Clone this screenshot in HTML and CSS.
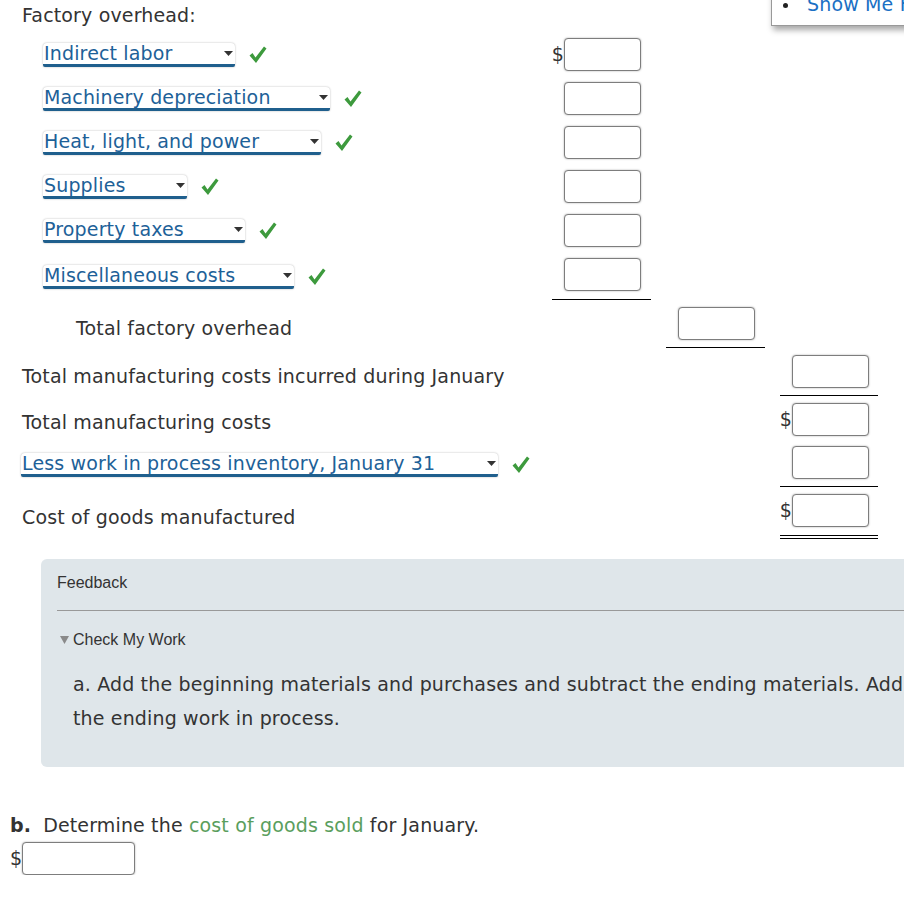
FILE: index.html
```html
<!DOCTYPE html>
<html lang="en">
<head>
    <meta charset="UTF-8">
    <meta name="viewport" content="width=device-width, initial-scale=1.0">
    <title>Cost of Goods Manufactured</title>
    <link rel="stylesheet" href="styles.css">
</head>
<body>
    <div class="menu">
        <div class="menu-item"><span class="dot"></span><a href="#" class="menu-link">Show Me How</a></div>
    </div>

    <div class="page">
        <div class="part-a">
            <div class="heading">Factory overhead:</div>

            <div class="row item">
                <div class="label">
                    <span class="dd w-labor">Indirect labor<svg class="arrow" width="9" height="5" viewBox="0 0 9 5"><polygon points="0,0 9,0 4.5,5"/></svg></span>
                    <svg class="check" width="18" height="18" viewBox="0 0 18 18"><path d="M0.5 9.5 L3.5 7 L6.5 11.5 L15 0.5 L17.5 2.5 L7 17 Z"/></svg>
                </div>
                <div class="cell c1"><span class="dollar">$</span><input class="box" type="text"></div>
            </div>

            <div class="row item">
                <div class="label">
                    <span class="dd w-machinery">Machinery depreciation<svg class="arrow" width="9" height="5" viewBox="0 0 9 5"><polygon points="0,0 9,0 4.5,5"/></svg></span>
                    <svg class="check" width="18" height="18" viewBox="0 0 18 18"><path d="M0.5 9.5 L3.5 7 L6.5 11.5 L15 0.5 L17.5 2.5 L7 17 Z"/></svg>
                </div>
                <div class="cell c1"><input class="box" type="text"></div>
            </div>

            <div class="row item">
                <div class="label">
                    <span class="dd w-power">Heat, light, and power<svg class="arrow" width="9" height="5" viewBox="0 0 9 5"><polygon points="0,0 9,0 4.5,5"/></svg></span>
                    <svg class="check" width="18" height="18" viewBox="0 0 18 18"><path d="M0.5 9.5 L3.5 7 L6.5 11.5 L15 0.5 L17.5 2.5 L7 17 Z"/></svg>
                </div>
                <div class="cell c1"><input class="box" type="text"></div>
            </div>

            <div class="row item">
                <div class="label">
                    <span class="dd w-supplies">Supplies<svg class="arrow" width="9" height="5" viewBox="0 0 9 5"><polygon points="0,0 9,0 4.5,5"/></svg></span>
                    <svg class="check" width="18" height="18" viewBox="0 0 18 18"><path d="M0.5 9.5 L3.5 7 L6.5 11.5 L15 0.5 L17.5 2.5 L7 17 Z"/></svg>
                </div>
                <div class="cell c1"><input class="box" type="text"></div>
            </div>

            <div class="row item">
                <div class="label">
                    <span class="dd w-taxes">Property taxes<svg class="arrow" width="9" height="5" viewBox="0 0 9 5"><polygon points="0,0 9,0 4.5,5"/></svg></span>
                    <svg class="check" width="18" height="18" viewBox="0 0 18 18"><path d="M0.5 9.5 L3.5 7 L6.5 11.5 L15 0.5 L17.5 2.5 L7 17 Z"/></svg>
                </div>
                <div class="cell c1"><input class="box" type="text"></div>
            </div>

            <div class="row item last">
                <div class="label">
                    <span class="dd w-misc">Miscellaneous costs<svg class="arrow" width="9" height="5" viewBox="0 0 9 5"><polygon points="0,0 9,0 4.5,5"/></svg></span>
                    <svg class="check" width="18" height="18" viewBox="0 0 18 18"><path d="M0.5 9.5 L3.5 7 L6.5 11.5 L15 0.5 L17.5 2.5 L7 17 Z"/></svg>
                </div>
                <div class="cell c1 rule"><input class="box" type="text"></div>
            </div>

            <div class="row total">
                <div class="label indent">Total factory overhead</div>
                <div class="cell c2 rule"><input class="box" type="text"></div>
            </div>

            <div class="row total">
                <div class="label">Total manufacturing costs incurred during January</div>
                <div class="cell c3 rule"><input class="box" type="text"></div>
            </div>

            <div class="row total tight">
                <div class="label">Total manufacturing costs</div>
                <div class="cell c3"><span class="dollar">$</span><input class="box" type="text"></div>
            </div>

            <div class="row total">
                <div class="label select-label">
                    <span class="dd w-less">Less work in process inventory, January 31<svg class="arrow" width="9" height="5" viewBox="0 0 9 5"><polygon points="0,0 9,0 4.5,5"/></svg></span>
                    <svg class="check" width="18" height="18" viewBox="0 0 18 18"><path d="M0.5 9.5 L3.5 7 L6.5 11.5 L15 0.5 L17.5 2.5 L7 17 Z"/></svg>
                </div>
                <div class="cell c3 rule"><input class="box" type="text"></div>
            </div>

            <div class="row total">
                <div class="label">Cost of goods manufactured</div>
                <div class="cell c3 double"><span class="dollar">$</span><input class="box" type="text"></div>
            </div>

            <div class="feedback">
                <div class="fb-title">Feedback</div>
                <div class="fb-toggle">
                    <svg width="9" height="8" viewBox="0 0 9 8"><polygon points="0,0 9,0 4.5,8"/></svg>
                    Check My Work
                </div>
                <p class="fb-text">a. Add the beginning materials and purchases and subtract the ending materials. Add<br>the ending work in process.</p>
            </div>
        </div>

        <div class="part-b">
            <div class="question"><span class="part-letter">b.</span>Determine the <span class="term">cost of goods sold</span> for January.</div>
            <div class="answer"><span class="dollar">$</span><input class="box wide" type="text"></div>
        </div>
    </div>
</body>
</html>
```

FILE: styles.css
```css
body {
    margin: 0;
    font-family: "DejaVu Sans", Verdana, sans-serif;
    font-size: 19px;
    letter-spacing: 0.15px;
    color: #333;
    background-color: #fff;
    overflow-x: hidden;
}

/* popup menu peeking in at the top right */
.menu {
    position: absolute;
    top: -40px;
    left: 771px;
    width: 300px;
    height: 66px;
    padding-top: 31px;
    box-sizing: border-box;
    background-color: #fff;
    border: 1px solid #999;
    box-shadow: 2px 4px 6px rgba(0, 0, 0, 0.35);
}

.menu-item {
    display: flex;
    align-items: center;
    line-height: 24px;
}

.dot {
    width: 5px;
    height: 5px;
    margin: 2px 0 0 11px;
    border-radius: 50%;
    background-color: #222;
}

.menu-link {
    margin-left: 19px;
    color: #1a70c4;
    text-decoration: none;
    white-space: nowrap;
}

.page {
    padding-left: 10px;
}

.part-a {
    padding-left: 12px;
}

.heading {
    line-height: 31px;
}

.row {
    display: grid;
    grid-template-columns: 515px 99px 99px 98px;
    column-gap: 15px;
}

.label {
    grid-column: 1;
    align-self: center;
    white-space: nowrap;
}

.c1 { grid-column: 2; }
.c2 { grid-column: 3; }
.c3 { grid-column: 4; }

.cell {
    display: flex;
    justify-content: flex-end;
    align-items: center;
    padding: 7px 10px 4px 0;
}

.c3 {
    padding-right: 9px;
}

.dollar {
    line-height: 1;
}

.box {
    width: 77px;
    height: 33px;
    box-sizing: border-box;
    margin: 0;
    padding: 0 6px;
    font: inherit;
    background-color: #fff;
    border: 1px solid #7d7d7d;
    border-radius: 4px;
    box-shadow: 0 0 2px rgba(0, 0, 0, 0.35);
}

.box.wide {
    width: 113px;
}

/* dropdown rows */
.item .label,
.select-label {
    display: flex;
    align-items: center;
}

.item .label {
    padding: 3px 0 0 21px;
}

.select-label {
    margin-left: -1px;
}

.dd {
    display: inline-flex;
    align-items: center;
    height: 24px;
    box-sizing: border-box;
    padding: 0 2px 0 1px;
    line-height: 21px;
    color: #1d6198;
    background-color: #fff;
    border-bottom: 3px solid #1f5f8d;
    border-radius: 4px 4px 2px 2px;
    box-shadow: 0 0 2px rgba(0, 0, 0, 0.3);
}

.dd .arrow {
    margin-left: auto;
    fill: #333;
}

.w-labor { width: 192px; }
.w-machinery { width: 287px; }
.w-power { width: 278px; }
.w-supplies { width: 144px; }
.w-taxes { width: 202px; }
.w-misc { width: 251px; }
.w-less { width: 477px; }

.check {
    margin-left: 14px;
    fill: #3d9a3d;
}

.item.last .cell {
    padding-bottom: 8px;
}

/* total rows */
.total .cell {
    padding-bottom: 7px;
}

.total .label {
    padding-top: 8px;
}

.total .select-label {
    padding-top: 3px;
}

.total.tight .cell {
    padding-bottom: 3px;
}

.indent {
    padding-left: 54px;
}

.rule {
    border-bottom: 1px solid #000;
}

.total .double {
    padding-bottom: 8px;
    border-bottom: 4px double #000;
}

/* feedback panel */
.feedback {
    width: 1000px;
    margin: 20px 0 0 19px;
    padding: 0 0 32px 16px;
    background-color: #dfe6ea;
    border-radius: 6px;
}

.fb-title {
    padding: 14px 0 17px;
    font-family: "Liberation Sans", Arial, sans-serif;
    font-size: 16px;
    letter-spacing: 0;
    line-height: 20px;
    border-bottom: 1px solid #999;
}

.fb-toggle {
    display: flex;
    align-items: center;
    margin-top: 19px;
    padding-left: 3px;
    font-family: "Liberation Sans", Arial, sans-serif;
    font-size: 16px;
    letter-spacing: 0;
    line-height: 20px;
}

.fb-toggle svg {
    margin-right: 4px;
    fill: #8a8a8a;
}

.fb-text {
    margin: 17px 0 0;
    padding-left: 16px;
    line-height: 34px;
    white-space: nowrap;
}

/* part b */
.part-b {
    margin-top: 47px;
}

.question {
    line-height: 22px;
}

.part-letter {
    font-weight: bold;
    margin-right: 12px;
}

.term {
    color: #5a9e5d;
}

.answer {
    display: flex;
    align-items: center;
    margin-top: 6px;
}
```
